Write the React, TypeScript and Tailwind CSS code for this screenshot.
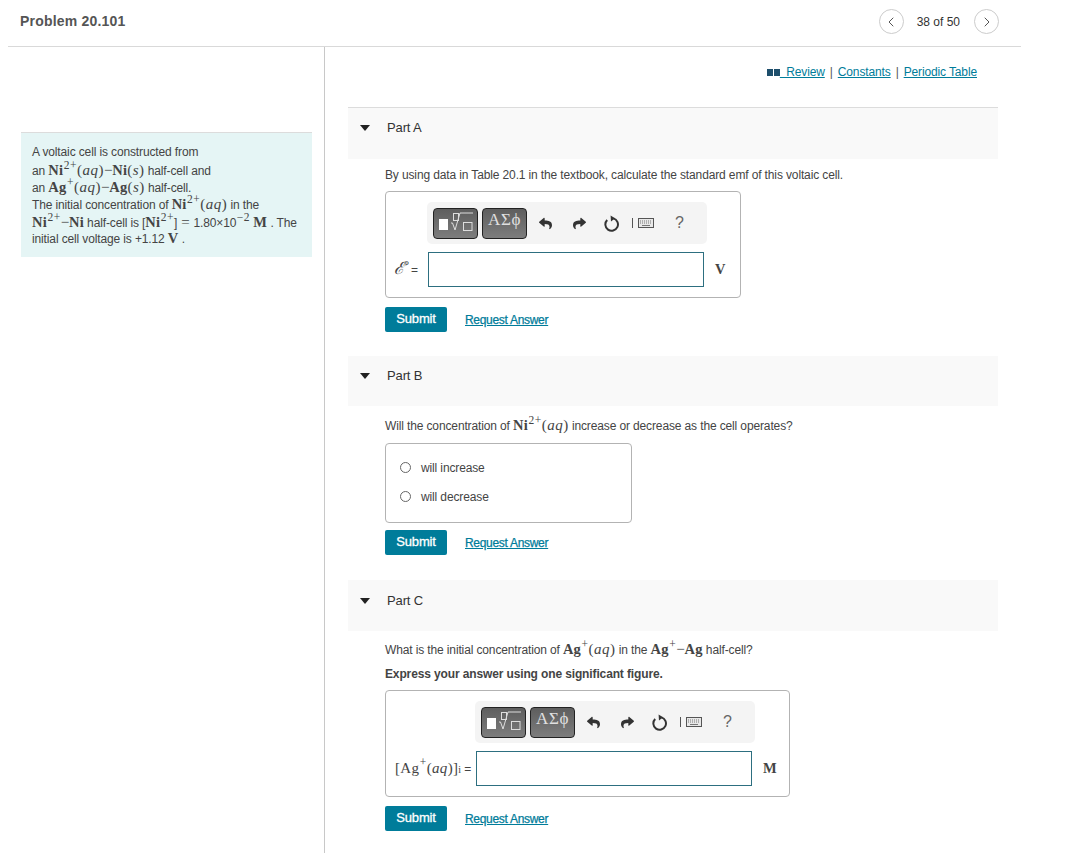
import type { ReactNode } from "react";
import { ChevronLeft, ChevronRight } from "lucide-react";
import { FaReply, FaShare } from "react-icons/fa";

const BOX = "rounded-[4px] border border-[#b3b3b3] bg-white";

function B({ children }: { children: ReactNode }) {
  return <span className="font-['Liberation_Serif',serif] text-[14.5px] font-bold tracking-[0.2px] text-[#444]">{children}</span>;
}

function Sup({ children }: { children: ReactNode }) {
  return <sup className="relative top-[-1px] ml-[0.5px] align-super font-['Liberation_Serif',serif] text-[11.5px] leading-none font-normal tracking-[0.5px] text-[#444]">{children}</sup>;
}

function Aq({ s = "aq" }: { s?: string }) {
  return (
    <span className="font-['Liberation_Serif',serif] text-[15px] tracking-[0.5px] text-[#444]">
      (<i>{s}</i>)
    </span>
  );
}

function Dash() {
  return <span className="font-['Liberation_Serif',serif] text-[15px] text-[#444]">−</span>;
}

function MathIcon() {
  return (
    <svg width="43" height="29" viewBox="0 0 43 29" fill="none">
      <rect x="5" y="10" width="9" height="11" fill="#fff" />
      <rect x="19.5" y="4.5" width="5" height="7" stroke="#ddd" strokeWidth="1" />
      <path d="M17 14l1.5 0 2.5 7 5-17h13" stroke="#ddd" strokeWidth="1" />
      <rect x="29.5" y="13.5" width="8.5" height="8" stroke="#ddd" strokeWidth="1" />
    </svg>
  );
}

function Keyboard() {
  return (
    <svg width="16" height="10" viewBox="0 0 16 10">
      <rect x="0.5" y="0.5" width="15" height="9" fill="#e8e8e8" stroke="#555" />
      <path d="M2 3h12M2 5h12" stroke="#777" strokeWidth="1" strokeDasharray="1 1" />
      <path d="M4 7.5h8" stroke="#777" strokeWidth="1" />
    </svg>
  );
}

function Reset() {
  return (
    <svg width="16" height="17" viewBox="0 0 16 17" fill="none">
      <path d="M9.4 3.4A6.3 6.3 0 1 1 3.2 5" stroke="#333" strokeWidth="2" />
      <path d="M6.6 0.4L11 3.2 7 6.4z" fill="#333" />
    </svg>
  );
}

function Toolbar() {
  return (
    <div className="flex h-[42px] w-[280px] items-center rounded-[5px] bg-[#f4f4f4] pl-[6px] text-[#333]">
      <div className="flex h-[31px] w-[45px] items-center justify-center rounded-[4px] border border-[#222] bg-gradient-to-b from-[#5e5e5e] to-[#7d7d7d]">
        <MathIcon />
      </div>
      <div className="ml-[4px] flex h-[31px] w-[45px] items-start justify-center rounded-[4px] border border-[#222] bg-gradient-to-b from-[#5e5e5e] to-[#7d7d7d] pt-[1px] font-['Liberation_Serif',serif] text-[17px] leading-[20px] tracking-[0.6px] text-[#e0e0e0]">
        ΑΣϕ
      </div>
      <FaReply className="ml-[12px] h-[13px] w-[13px] text-[#333]" />
      <FaShare className="ml-[21px] h-[13px] w-[13px] text-[#333]" />
      <span className="ml-[18px] flex"><Reset /></span>
      <span className="ml-[12px] h-[10px] w-px bg-[#555]" />
      <span className="ml-[5px] flex items-center"><Keyboard /></span>
      <span className="ml-[21px] font-['Liberation_Sans',sans-serif] text-[16px] text-[#666]">?</span>
    </div>
  );
}

function Actions() {
  return (
    <div className="flex h-[25px] items-center">
      <button className="flex h-[25px] w-[62px] items-center justify-center rounded-[2px] bg-[#007c9a] pb-[1px] text-[13px] text-white [-webkit-text-stroke:0.3px_#fff]">
        Submit
      </button>
      <a className="ml-[18px] text-[12px] tracking-[-0.3px] text-[#007c9a] underline [-webkit-text-stroke:0.25px_#007c9a]">Request Answer</a>
    </div>
  );
}

function PartBand({ label, h, pb }: { label: string; h: string; pb: string }) {
  return (
    <div className={`flex items-center bg-[#f9f9f9] pl-[12px] ${h} ${pb}`}>
      <span className="h-0 w-0 border-x-[5px] border-t-[6px] border-x-transparent border-t-[#222]" />
      <span className="ml-[17px] text-[13px] text-[#333]">{label}</span>
    </div>
  );
}

function Radio({ label }: { label: string }) {
  return (
    <div className="flex h-[29px] items-center pl-[14px]">
      <span className="h-[11px] w-[11px] rounded-full border border-[#666] bg-white" />
      <span className="ml-[10px] text-[#444]">{label}</span>
    </div>
  );
}

export default function App() {
  return (
    <div className="h-[853px] w-[1070px] overflow-hidden bg-white font-['Liberation_Sans',sans-serif] text-[12px] tracking-[-0.13px] text-[#444]">
      <div className="ml-[8px] flex h-[47px] w-[1013px] items-center justify-between border-b border-[#d9d9d9] pl-[12px] pr-[22px]">
        <h1 className="mb-[4px] text-[14px] font-bold tracking-[0.2px] text-[#555]">Problem 20.101</h1>
        <div className="mb-[3px] flex items-center text-[#333]">
          <span className="flex h-[25px] w-[25px] items-center justify-center rounded-full border border-[#ccc]">
            <ChevronLeft className="h-[16px] w-[16px] text-[#555]" strokeWidth={1.5} />
          </span>
          <span className="ml-[13px] mr-[14px] text-[12px] tracking-normal">38 of 50</span>
          <span className="flex h-[25px] w-[25px] items-center justify-center rounded-full border border-[#ccc]">
            <ChevronRight className="h-[16px] w-[16px] text-[#555]" strokeWidth={1.5} />
          </span>
        </div>
      </div>

      <div className="flex h-[806px]">
        <aside className="w-[325px] shrink-0 border-r border-[#c8c8c8] pl-[21px] pr-[12px] pt-[85px]">
          <div className="h-[125px] border-t border-[#dcdcdc] bg-[#e5f5f5] pl-[11px] pt-[10.5px] text-[#444] [&>div]:h-[17.3px] [&>div]:leading-[17.3px] [&>div]:whitespace-nowrap">
            <div>A voltaic cell is constructed from</div>
            <div>an <B>Ni</B><Sup>2+</Sup><Aq /><Dash /><B>Ni</B><Aq s="s" /> half-cell and</div>
            <div>an <B>Ag</B><Sup>+</Sup><Aq /><Dash /><B>Ag</B><Aq s="s" /> half-cell.</div>
            <div>The initial concentration of <B>Ni</B><Sup>2+</Sup><Aq /> in the</div>
            <div><B>Ni</B><Sup>2+</Sup><Dash /><B>Ni</B> half-cell is [<B>Ni</B><Sup>2+</Sup>]<span className="mx-[4px] font-['Liberation_Serif',serif] text-[15px]">=</span>1.80×10<Sup>−2</Sup> <B>M</B> . The</div>
            <div>initial cell voltage is +1.12 <B>V</B> .</div>
          </div>
        </aside>

        <main className="w-[673px] pl-[23px]">
          <div className="flex h-[60px] justify-end pr-[21px] pt-[17px] leading-[16px] text-[#007c9a]">
            <span className="mt-[5px] flex h-[7px] gap-[1px]">
              <span className="h-[7px] w-[6px] bg-[#1d4e6b]" />
              <span className="h-[7px] w-[6px] bg-[#1d4e6b]" />
            </span>
            <a className="underline">&nbsp;&nbsp;Review</a>
            <span className="mx-[5px] text-[#555]">|</span>
            <a className="underline">Constants</a>
            <span className="mx-[5px] text-[#555]">|</span>
            <a className="underline">Periodic Table</a>
          </div>

          <section className="border-t border-[#dcdcdc]">
            <PartBand label="Part A" h="h-[51px]" pb="pb-[11px]" />
            <div className="pl-[37px]">
              <p className="mt-[8px] h-[16px] leading-[16px]">By using data in Table 20.1 in the textbook, calculate the standard emf of this voltaic cell.</p>
              <div className={`mt-[8px] h-[107px] w-[356px] pl-[41px] pt-[10px] ${BOX}`}>
                <Toolbar />
                <div className="mt-[8px] flex h-[35px] items-center">
                  <span className="absolute ml-[-33px] whitespace-nowrap font-['Liberation_Serif',serif] text-[17px] leading-[20px]"><i>ℰ</i><span className="relative top-[-5px] text-[13px]">°</span><span className="ml-[2px] font-['Liberation_Sans',sans-serif] text-[12px]">=</span></span>
                  <div className="ml-[1px] h-[35px] w-[276px] border border-[#2d6f80]" />
                  <B><span className="ml-[11px]">V</span></B>
                </div>
              </div>
              <div className="mt-[9px]"><Actions /></div>
            </div>
          </section>

          <section className="mt-[24px]">
            <PartBand label="Part B" h="h-[50px]" pb="pb-[11px]" />
            <div className="pl-[37px]">
              <p className="mt-[10px] h-[18px] whitespace-nowrap leading-[18px]">Will the concentration of <B>Ni</B><Sup>2+</Sup><Aq /> increase or decrease as the cell operates?</p>
              <div className={`mt-[9px] h-[80px] w-[247px] py-[9px] ${BOX}`}>
                <Radio label="will increase" />
                <Radio label="will decrease" />
              </div>
              <div className="mt-[7px]"><Actions /></div>
            </div>
          </section>

          <section className="mt-[25px]">
            <PartBand label="Part C" h="h-[51px]" pb="pb-[9px]" />
            <div className="pl-[37px]">
              <p className="mt-[9px] h-[18px] whitespace-nowrap leading-[18px]">What is the initial concentration of <B>Ag</B><Sup>+</Sup><Aq /> in the <B>Ag</B><Sup>+</Sup><Dash /><B>Ag</B> half-cell?</p>
              <p className="mt-[8px] h-[16px] leading-[16px] font-bold">Express your answer using one significant figure.</p>
              <div className={`mt-[8px] h-[107px] w-[405px] pl-[89px] pt-[10px] ${BOX}`}>
                <Toolbar />
                <div className="mt-[8px] flex h-[35px] items-center">
                  <span className="absolute ml-[-80px] whitespace-nowrap font-['Liberation_Serif',serif] text-[15px] tracking-[0.3px]">[Ag<Sup>+</Sup>(<i>aq</i>)]<span className="text-[10px]">i</span><span className="ml-[3px] font-['Liberation_Sans',sans-serif] text-[12px]">=</span></span>
                  <div className="ml-[1px] h-[35px] w-[276px] border border-[#2d6f80]" />
                  <B><span className="ml-[11px]">M</span></B>
                </div>
              </div>
              <div className="mt-[9px]"><Actions /></div>
            </div>
          </section>
        </main>
      </div>
    </div>
  );
}
